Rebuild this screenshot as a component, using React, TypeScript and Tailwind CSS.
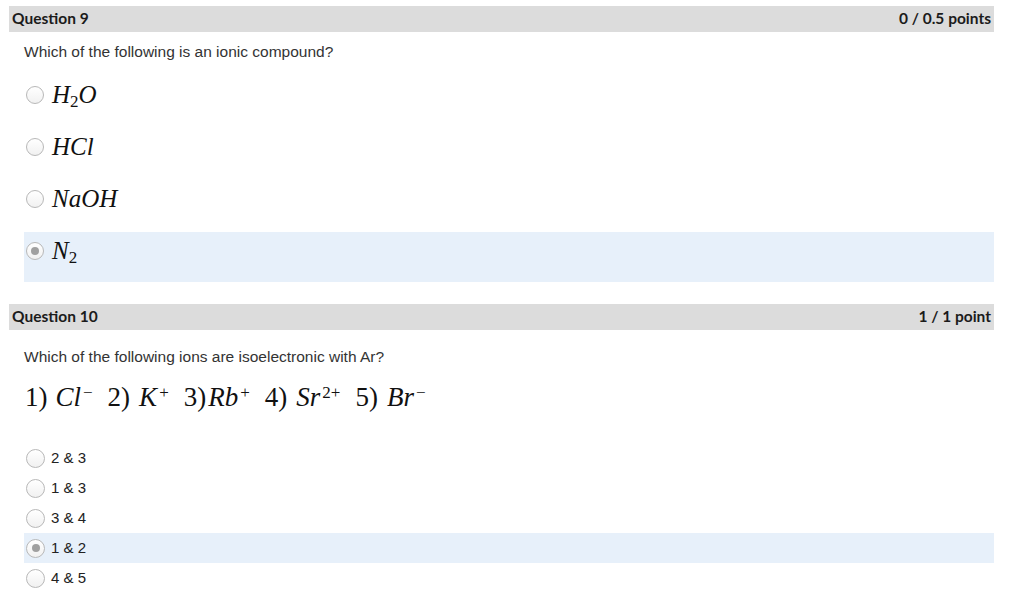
const q9 = [
  { id: "a", label: <><i>H</i><sub className="text-[17px] not-italic">2</sub><i>O</i></> },
  { id: "b", label: <i>HCl</i> },
  { id: "c", label: <i>NaOH</i> },
  { id: "d", label: <><i>N</i><sub className="text-[17px] not-italic">2</sub></>, checked: true },
];

const q10 = [
  { id: "a", label: "2 & 3" },
  { id: "b", label: "1 & 3" },
  { id: "c", label: "3 & 4" },
  { id: "d", label: "1 & 2", checked: true },
  { id: "e", label: "4 & 5" },
];

const ions = [
  { n: "1)", sym: "Cl", ch: "−", gap: "ml-[8px]" },
  { n: "2)", sym: "K", ch: "+", gap: "ml-[9px]" },
  { n: "3)", sym: "Rb", ch: "+", gap: "ml-[2px]" },
  { n: "4)", sym: "Sr", ch: "2+", gap: "ml-[9px]" },
  { n: "5)", sym: "Br", ch: "−", gap: "ml-[9px]" },
];

function Radio({ checked, size = 18 }: { checked?: boolean; size?: number }) {
  return (
    <span
      className="flex items-center justify-center rounded-full border border-[#b8b8b8] bg-gradient-to-b from-white to-[#f1f1f1] shrink-0"
      style={{ width: size, height: size }}
    >
      {checked && <span className="w-[8px] h-[8px] rounded-full bg-[#a0a0a0]" />}
    </span>
  );
}

function Header({ title, points }: { title: string; points: string }) {
  return (
    <div className="h-[26px] bg-[#dcdcdc] flex items-center justify-between px-[3px] font-['Lato',sans-serif] font-bold text-[15.5px] text-[#1b1b1b]">
      <span>{title}</span>
      <span>{points}</span>
    </div>
  );
}

export default function App() {
  return (
    <div className="w-[1009px] h-[597px] bg-white overflow-hidden pl-[9px] pr-[15px] pt-[6px] font-['Liberation_Sans',Arial,sans-serif] text-[#333]">
      <Header title="Question 9" points="0 / 0.5 points" />
      <div className="pl-[15px]">
        <p className="text-[15.5px] leading-[18px] mt-[11px]">Which of the following is an ionic compound?</p>
        <div className="mt-[15px] flex flex-col gap-[2px]">
          {q9.map(o => (
            <div key={o.id} className={`h-[50px] flex items-start gap-[8px] pl-[2px] pt-[10px] ${o.checked ? "bg-[#e7f0fa]" : ""}`}>
              <Radio checked={o.checked} />
              <span className="font-['Liberation_Serif',serif] text-[25px] leading-[18px] text-[#111]">{o.label}</span>
            </div>
          ))}
        </div>
      </div>

      <div className="mt-[22px]">
        <Header title="Question 10" points="1 / 1 point" />
      </div>
      <div className="pl-[15px]">
        <p className="text-[15.5px] leading-[18px] mt-[18px]">Which of the following ions are isoelectronic with Ar?</p>
        <div className="mt-[16px] font-['Liberation_Serif',serif] text-[27px] leading-[30px] text-[#111] flex items-baseline gap-[15px] pl-[1px]">
          {ions.map(x => (
            <span key={x.n} className="flex items-baseline">
              <span>{x.n}</span>
              <i className={x.gap}>{x.sym}</i>
              <sup className="text-[17px] ml-[2px]">{x.ch}</sup>
            </span>
          ))}
        </div>
        <div className="mt-[31px] flex flex-col">
          {q10.map(o => (
            <div key={o.id} className={`h-[30px] flex items-center gap-[6px] pl-[2px] text-[15px] text-[#222] ${o.checked ? "bg-[#e7f0fa]" : ""}`}>
              <Radio checked={o.checked} size={19} />
              <span className="whitespace-pre">{o.label}</span>
            </div>
          ))}
        </div>
      </div>
    </div>
  );
}
